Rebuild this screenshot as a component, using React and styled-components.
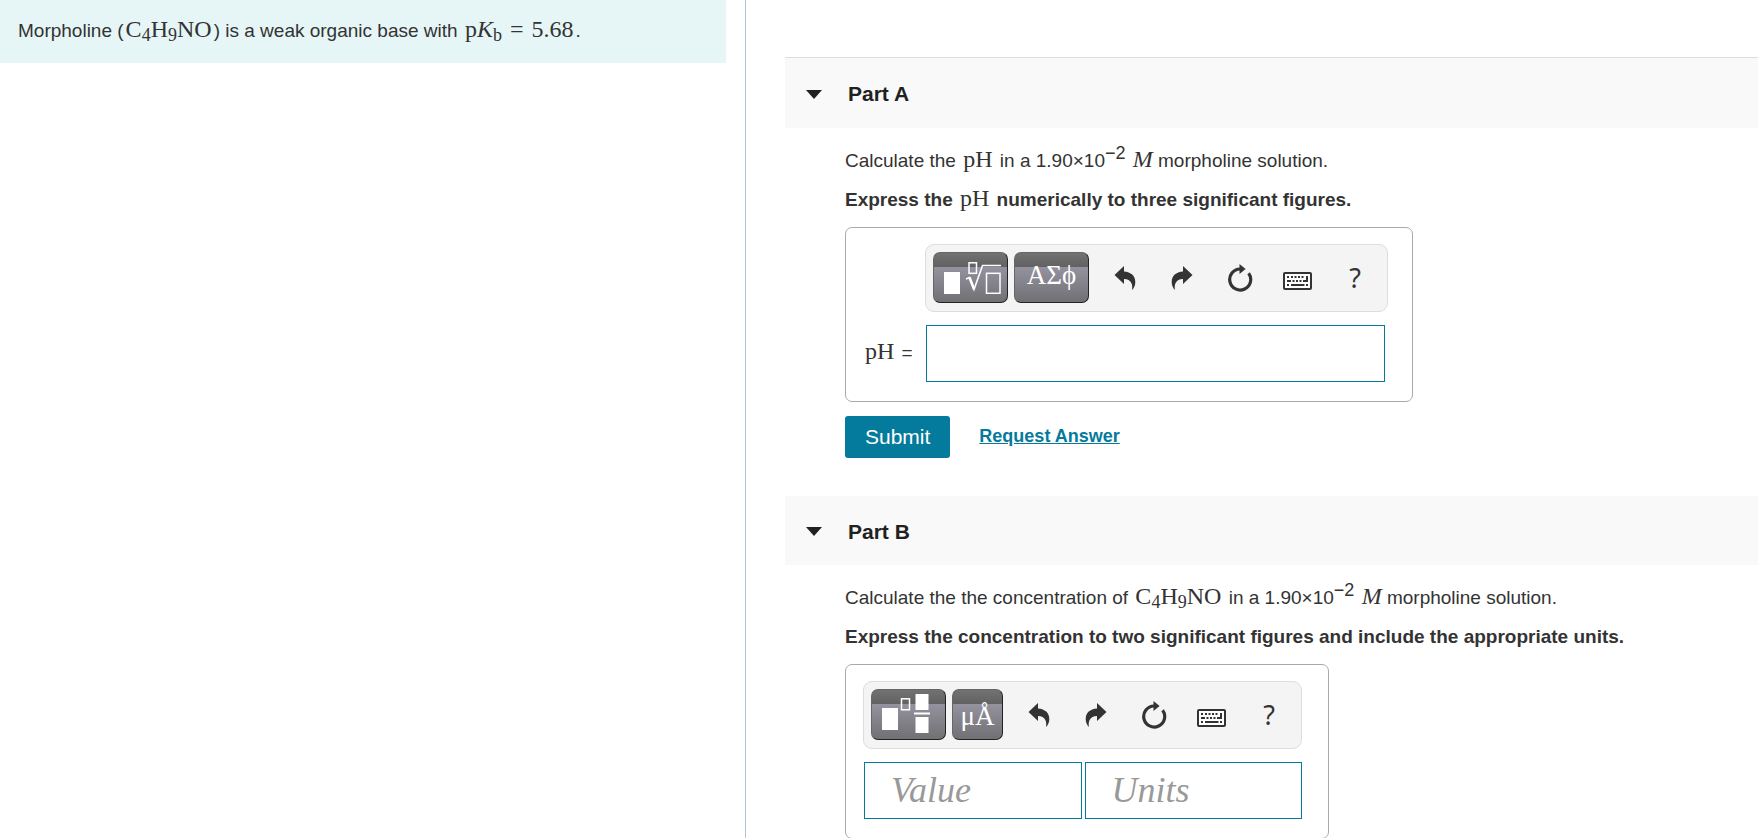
import React, { useState } from 'react';
import styled, { createGlobalStyle, css } from 'styled-components';

const UndoIcon = () => (
  <svg width="22" height="24" viewBox="0 0 22 24" aria-hidden="true">
    <path
      d="M0.5 9 L10 0 V5.6 C17 6 21.3 10 21.3 16 C21.3 19.5 20 22 18 24 C19 19 17.5 13.2 10 13 V18 Z"
      fill="#333"
    />
  </svg>
);

const RedoIcon = () => (
  <svg width="22" height="24" viewBox="0 0 22 24" aria-hidden="true">
    <path
      d="M21.5 9 L12 0 V5.6 C5 6 0.7 10 0.7 16 C0.7 19.5 2 22 4 24 C3 19 4.5 13.2 12 13 V18 Z"
      fill="#333"
    />
  </svg>
);

const ResetIcon = () => (
  <svg width="26" height="28" viewBox="0 0 26 28" aria-hidden="true">
    <path d="M21.6 9.2 A10.5 10.5 0 1 1 13 5" fill="none" stroke="#333" strokeWidth="3.2" />
    <path d="M12.5 0 L18.6 5 L12.5 10 Z" fill="#333" />
  </svg>
);

const KeyboardIcon = () => (
  <svg width="29" height="18" viewBox="0 0 29 18" aria-hidden="true">
    <rect x="1" y="1" width="27" height="16" rx="1" fill="#fff" stroke="#333" strokeWidth="2" />
    <path
      d="M4 5h2M8 5h2M11.5 5h2M15 5h2M18.5 5h2M4 9h4M9.5 9h2M13 9h2M16.5 9h2M20 9h2M4 13h2M8 13h13.5M23 13h2"
      stroke="#333"
      strokeWidth="2"
    />
    <path d="M24 4v5h-3" fill="none" stroke="#333" strokeWidth="2" />
  </svg>
);

const RootIcon = () => (
  <svg width="61" height="32" viewBox="-4 0 61 32" aria-hidden="true">
    <rect x="0" y="10" width="16" height="22" fill="#fff" />
    <rect x="25" y="0.8" width="7.5" height="10.5" fill="none" stroke="#fff" strokeWidth="1.5" />
    <path d="M22 17 L25.5 15.5 L30 27.5 L38.5 3.5 H57" fill="none" stroke="#fff" strokeWidth="1.6" />
    <path d="M25.5 15.5 L30 27" fill="none" stroke="#fff" strokeWidth="2.6" />
    <rect x="42.5" y="11.3" width="13.5" height="20" fill="none" stroke="#fff" strokeWidth="1.5" />
  </svg>
);

const FractionIcon = () => (
  <svg width="53" height="41" viewBox="0 0 53 41" aria-hidden="true">
    <rect x="0" y="14" width="16" height="22" fill="#fff" />
    <rect x="19.5" y="4.8" width="8" height="11" fill="none" stroke="#fff" strokeWidth="1.5" />
    <rect x="33.5" y="0" width="13" height="16" fill="#fff" />
    <rect x="32" y="18.5" width="16" height="2" fill="#fff" />
    <rect x="33.5" y="23" width="13" height="16" fill="#fff" />
  </svg>
);

const CaretIcon = () => (
  <svg width="16" height="9" viewBox="0 0 16 9" aria-hidden="true">
    <path d="M0 0 H16 L8 9 Z" fill="#212121" />
  </svg>
);

const Morpholine = () => (
  <MathText>
    C<Sub>4</Sub>H<Sub>9</Sub>NO
  </MathText>
);

const Molarity = () => (
  <>
    1.90×10<Sup>−2</Sup> <MathItalic>M</MathItalic>
  </>
);

const Tools = () => (
  <StTools>
    <StToolButton type="button" aria-label="Undo"><UndoIcon /></StToolButton>
    <StToolButton type="button" aria-label="Redo"><RedoIcon /></StToolButton>
    <StToolButton type="button" aria-label="Reset"><ResetIcon /></StToolButton>
    <StToolButton type="button" aria-label="Keyboard shortcuts" $low><KeyboardIcon /></StToolButton>
    <StToolButton type="button" aria-label="Help">?</StToolButton>
  </StTools>
);

const Part = ({ title, bordered, children }) => {
  const [open, setOpen] = useState(true);

  return (
    <StPart>
      <StPartHeader type="button" $bordered={bordered} aria-expanded={open} onClick={() => setOpen(!open)}>
        <CaretIcon />
        {title}
      </StPartHeader>
      {open && <StPartBody>{children}</StPartBody>}
    </StPart>
  );
};

const App = () => {
  const [ph, setPh] = useState('');
  const [value, setValue] = useState('');
  const [units, setUnits] = useState('');

  return (
    <StPage>
      <GlobalStyle />
      <StProblemPane>
        <StIntro>
          Morpholine (<Morpholine />) is a weak organic base with{' '}
          <MathText>
            p<i>K</i>
            <Sub>b</Sub> <Operator>=</Operator> 5.68
          </MathText>
          .
        </StIntro>
      </StProblemPane>
      <StAnswerPane>
        <Part title="Part A" bordered>
          <StQuestion>
            Calculate the <MathText>pH</MathText> in a <Molarity /> morpholine solution.
          </StQuestion>
          <StInstruction>
            Express the <MathText>pH</MathText> numerically to three significant figures.
          </StInstruction>
          <StAnswerBox $width={568} $right={24}>
            <StAnswerGrid>
              <StToolbar>
                <StPaletteButton type="button" aria-label="Templates"><RootIcon /></StPaletteButton>
                <StPaletteButton type="button"><Greek>ΑΣϕ</Greek></StPaletteButton>
                <Tools />
              </StToolbar>
              <StLabel htmlFor="ph">
                <MathText>pH</MathText> =
              </StLabel>
              <StInputRow $inset>
                <StInput id="ph" value={ph} onChange={(e) => setPh(e.target.value)} />
              </StInputRow>
            </StAnswerGrid>
          </StAnswerBox>
          <StActions>
            <StSubmit type="button">Submit</StSubmit>
            <StRequest href="#answer">Request Answer</StRequest>
          </StActions>
        </Part>
        <Part title="Part B">
          <StQuestion>
            Calculate the the concentration of <Morpholine /> in a <Molarity /> morpholine solution.
          </StQuestion>
          <StInstruction>
            Express the concentration to two significant figures and include the appropriate units.
          </StInstruction>
          <StAnswerBox $width={484} $right={26}>
            <StToolbar>
              <StPaletteButton type="button" aria-label="Templates"><FractionIcon /></StPaletteButton>
              <StPaletteButton type="button" $narrow><UnitGlyphs>μÅ</UnitGlyphs></StPaletteButton>
              <Tools />
            </StToolbar>
            <StInputRow>
              <StInput aria-label="Value" placeholder="Value" value={value} onChange={(e) => setValue(e.target.value)} />
              <StInput aria-label="Units" placeholder="Units" value={units} onChange={(e) => setUnits(e.target.value)} />
            </StInputRow>
          </StAnswerBox>
        </Part>
      </StAnswerPane>
    </StPage>
  );
};

export default App;

const GlobalStyle = createGlobalStyle`
  * {
    box-sizing: border-box;
  }
  body {
    margin: 0;
    background: #fff;
    color: #333;
    font-family: 'Liberation Sans', Arial, sans-serif;
    font-size: 19px;
  }
`;

const mathFont = css`
  font-family: 'Liberation Serif', 'Times New Roman', serif;
  font-weight: 400;
  font-size: 24px;
  line-height: 1;
`;

const StPage = styled.main`
  display: flex;
  height: 100vh;
`;

const StProblemPane = styled.section`
  flex: 0 0 746px;
  padding-right: 19px;
  border-right: 1px solid #b3c6d8;
`;

const StAnswerPane = styled.section`
  flex: 1;
  min-width: 0;
  padding: 57px 0 0 39px;
  overflow-y: auto;
  scrollbar-width: none;
`;

const StIntro = styled.p`
  margin: 0;
  padding: 17px 18px 19px;
  background: #e6f6f7;
  line-height: 27px;
`;

const MathText = styled.span`
  ${mathFont}
  padding: 0 2px;
`;

const MathItalic = styled.i`
  ${mathFont}
  padding-left: 2px;
`;

const Operator = styled.span`
  padding: 0 2px;
`;

const Sub = styled.sub`
  font-size: 18px;
  line-height: 0;
  vertical-align: -4px;
`;

const Sup = styled.sup`
  font-size: 18px;
  line-height: 0;
  vertical-align: 8px;
`;

const StPart = styled.section`
  margin-bottom: 38px;
`;

const StPartHeader = styled.button`
  display: flex;
  align-items: center;
  gap: 26px;
  width: 100%;
  height: ${({ $bordered }) => ($bordered ? '71px' : '69px')};
  padding: 2px 21px 0;
  border: none;
  border-top: ${({ $bordered }) => ($bordered ? '1px solid #ddd' : 'none')};
  background: #f9f9f9;
  color: #212121;
  font: bold 21px 'Liberation Sans', Arial, sans-serif;
  text-align: left;
  cursor: pointer;
`;

const StPartBody = styled.div`
  padding: 19px 20px 0 60px;
`;

const StQuestion = styled.p`
  margin: 0 0 12px;
  line-height: 27px;
`;

const StInstruction = styled.p`
  margin: 0 0 14px;
  font-weight: bold;
  line-height: 27px;
`;

const StAnswerBox = styled.div`
  width: ${({ $width }) => $width}px;
  max-width: 100%;
  height: 175px;
  padding: 16px ${({ $right }) => $right}px 0 17px;
  border: 1px solid #aaa;
  border-radius: 7px;
`;

const StAnswerGrid = styled.div`
  display: grid;
  grid-template-columns: 62px minmax(0, 1fr);
  align-items: center;

  > :first-child {
    grid-column: 2;
  }
`;

const StToolbar = styled.div`
  display: flex;
  align-items: center;
  gap: 6px;
  height: 68px;
  padding: 0 3px 1px 7px;
  margin-bottom: 13px;
  border: 1px solid #ddd;
  border-radius: 9px;
  background: #f4f4f4;
`;

const StPaletteButton = styled.button`
  display: flex;
  flex: none;
  align-items: center;
  justify-content: center;
  width: ${({ $narrow }) => ($narrow ? '51px' : '75px')};
  height: 51px;
  padding: 0;
  border: 1px solid #666;
  border-right-color: #222;
  border-bottom: 1px solid #222;
  border-radius: 7px;
  background: linear-gradient(#727272, #616161 29%, #94929e 29%, #717074);
  color: #fff;
  font: 27px 'Liberation Serif', 'Times New Roman', serif;
  cursor: pointer;
`;

const Greek = styled.span`
  padding-bottom: 4px;
`;

const UnitGlyphs = styled.span`
  padding-top: 4px;
`;

const StTools = styled.div`
  display: flex;
  flex: 1;
  padding-left: 1px;
`;

const StToolButton = styled.button`
  display: flex;
  flex: 1;
  align-items: center;
  justify-content: center;
  height: 51px;
  padding: ${({ $low }) => ($low ? '6px 0 0' : '0')};
  border: none;
  background: transparent;
  color: #333;
  font: 27px 'Noto Sans', sans-serif;
  cursor: pointer;
`;

const StLabel = styled.label`
  padding-bottom: 4px;
  white-space: nowrap;
`;

const StInput = styled.input`
  flex: 1;
  min-width: 0;
  height: 57px;
  padding: 0 26px 2px;
  border: 1px solid #047a9c;
  background: #fff;
  color: #333;
  font: italic 36px 'Liberation Serif', 'Times New Roman', serif;

  &::placeholder {
    color: #999;
    opacity: 1;
  }
`;

const StInputRow = styled.div`
  display: flex;
  gap: 3px;
  padding: ${({ $inset }) => ($inset ? '0 3px 0 1px' : '0 0 0 1px')};
`;

const StActions = styled.div`
  display: flex;
  align-items: center;
  gap: 29px;
  margin-top: 14px;
`;

const StSubmit = styled.button`
  height: 42px;
  padding: 0 20px;
  border: none;
  border-radius: 3px;
  background: #047a9c;
  color: #fff;
  font: 21px 'Liberation Sans', Arial, sans-serif;
  cursor: pointer;
`;

const StRequest = styled.a`
  padding-bottom: 2px;
  color: #047a9c;
  font-size: 18px;
  font-weight: bold;
`;
